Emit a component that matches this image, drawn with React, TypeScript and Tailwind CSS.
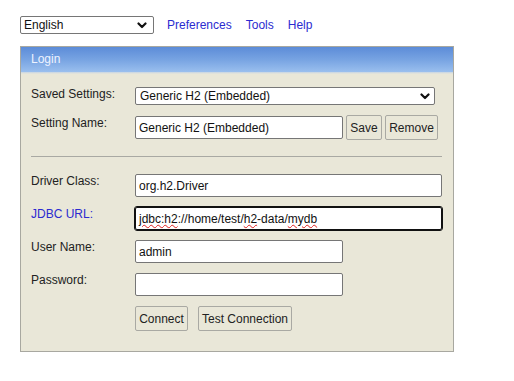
import React from 'react';

const Chevron: React.FC = () => (
  <svg width="10" height="7" viewBox="0 0 10 7" className="shrink-0">
    <polyline points="1.5,1.5 5,5 8.5,1.5" fill="none" stroke="#111" strokeWidth="2.2" strokeLinecap="round" strokeLinejoin="round" />
  </svg>
);

const Label: React.FC<{ children: React.ReactNode; blue?: boolean }> = ({ children, blue }) => (
  <div className={`w-[104px] shrink-0 self-start leading-[14px] ${blue ? 'text-[#2b2bd0]' : 'text-[#222]'}`}>
    {children}
  </div>
);

const Field: React.FC<{ w: string; children?: React.ReactNode; focused?: boolean }> = ({ w, children, focused }) => (
  <div
    className={`${w} h-[23px] flex items-center px-[3px] bg-white rounded-[2px] text-[#111] leading-[14px] whitespace-nowrap ${
      focused ? 'border border-[#111] outline outline-[#111]' : 'border border-[#767676]'
    }`}
  >
    {children}
  </div>
);

const Btn: React.FC<{ w: string; children: React.ReactNode }> = ({ w, children }) => (
  <div className={`${w} h-[25px] flex items-center justify-center rounded-[2px] border border-[#a9a9a3] bg-[#e9e7d8] text-[#222] leading-[14px]`}>
    {children}
  </div>
);

const Squiggle: React.FC<{ children: React.ReactNode }> = ({ children }) => (
  <span className="underline decoration-wavy decoration-[#e02020] decoration-1 underline-offset-[1px]">{children}</span>
);

export default function App() {
  return (
    <div className="min-h-screen bg-white px-[20px] pt-[16px] font-['Liberation_Sans',Arial,sans-serif] text-[12px]">
      <div className="flex items-center">
        <div className="w-[134px] h-[18px] flex items-center justify-between pl-[3px] pr-[6px] border border-[#767676] rounded-[2px] bg-white text-[#111] leading-[14px]">
          <span>English</span>
          <Chevron />
        </div>
        <nav className="flex gap-[14px] ml-[13px] text-[#2b2bd0] leading-[14px]">
          <span>Preferences</span>
          <span>Tools</span>
          <span>Help</span>
        </nav>
      </div>

      <div className="mt-[12px] w-[434px] border border-[#a8a8a0] bg-[#e9e7d8]">
        <div className="h-[25px] bg-gradient-to-b from-[#5c8cd8] via-[#77a3e2] to-[#9abfee] pl-[10px] pt-[5px] text-[#eef3ff] leading-[14px]">
          Login
        </div>
        <div className="h-[2px] bg-gradient-to-b from-[#c4d4e6] to-[#e9e7d8]" />

        <div className="px-[10px] pt-[13px] pb-[20px]">
          <div className="flex items-start">
            <Label>Saved Settings:</Label>
            <div className="w-[300px] h-[18px] flex items-center justify-between pl-[4px] pr-[4px] border border-[#767676] rounded-[2px] bg-white text-[#111] leading-[14px]">
              <span>Generic H2 (Embedded)</span>
              <Chevron />
            </div>
          </div>

          <div className="mt-[10px] flex items-center">
            <Label>
              <div className="pt-[1px]">Setting Name:</div>
            </Label>
            <div className="flex items-center gap-[3px]">
              <Field w="w-[208px]">Generic H2 (Embedded)</Field>
              <Btn w="w-[36px]">Save</Btn>
              <Btn w="w-[53px]">Remove</Btn>
            </div>
          </div>

          <div className="mt-[16px] h-px w-[411px] bg-[#a9a9a3]" />

          <div className="mt-[17px] flex flex-col gap-[10px]">
            <div className="flex items-center">
              <Label>Driver Class:</Label>
              <Field w="w-[307px]">org.h2.Driver</Field>
            </div>
            <div className="flex items-center">
              <Label blue>JDBC URL:</Label>
              <Field w="w-[307px]" focused>
                <span>
                  <Squiggle>jdbc:h2</Squiggle>://home/test/<Squiggle>h2</Squiggle>-data/<Squiggle>mydb</Squiggle>
                </span>
              </Field>
            </div>
            <div className="flex items-center">
              <Label>User Name:</Label>
              <Field w="w-[208px]">admin</Field>
            </div>
            <div className="flex items-center">
              <Label>Password:</Label>
              <Field w="w-[208px]" />
            </div>
            <div className="flex items-center">
              <div className="w-[104px] shrink-0" />
              <div className="flex gap-[10px]">
                <Btn w="w-[53px]">Connect</Btn>
                <Btn w="w-[94px]">Test Connection</Btn>
              </div>
            </div>
          </div>
        </div>
      </div>
    </div>
  );
}
